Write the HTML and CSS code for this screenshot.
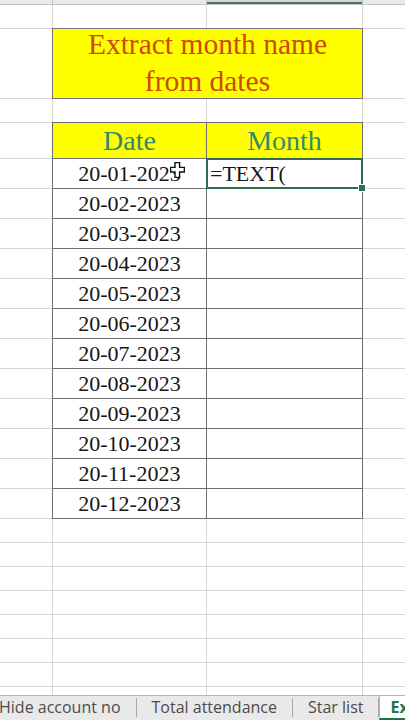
FILE: index.html
```html
<!DOCTYPE html>
<html>
<head>
<meta charset="utf-8">
<title>Extract month name from dates</title>
<link rel="stylesheet" href="styles.css">
</head>
<body>
<div class="app">
  <div class="colheads">
    <div class="ch"></div>
    <div class="ch"></div>
    <div class="ch ch-sel"></div>
    <div class="ch"></div>
  </div>

  <div class="sheet">
    <div class="cell"></div><div class="cell"></div><div class="cell"></div><div class="cell"></div>

    <div class="cell"></div>
    <div class="cell title">Extract month name<br>from dates</div>
    <div class="cell"></div>

    <div class="cell"></div><div class="cell"></div><div class="cell"></div><div class="cell"></div>

    <div class="cell"></div>
    <div class="cell tbl head">Date</div>
    <div class="cell tbl head">Month</div>
    <div class="cell"></div>

    <div class="cell"></div>
    <div class="cell tbl date has-cursor">20-01-2023
      <svg class="cursor" width="15" height="16" viewBox="0 0 15 16"><path d="M5 0.6 H9.6 V5.4 H14.4 V10 H9.6 V15.4 H5 V10 H0.6 V5.4 H5 Z" fill="#fff" stroke="#111" stroke-width="1.4" stroke-linejoin="miter"/></svg>
    </div>
    <div class="cell tbl val selected">=TEXT(</div>
    <div class="cell"></div>

    <div class="cell"></div><div class="cell tbl date">20-02-2023</div><div class="cell tbl val"></div><div class="cell"></div>
    <div class="cell"></div><div class="cell tbl date">20-03-2023</div><div class="cell tbl val"></div><div class="cell"></div>
    <div class="cell"></div><div class="cell tbl date">20-04-2023</div><div class="cell tbl val"></div><div class="cell"></div>
    <div class="cell"></div><div class="cell tbl date">20-05-2023</div><div class="cell tbl val"></div><div class="cell"></div>
    <div class="cell"></div><div class="cell tbl date">20-06-2023</div><div class="cell tbl val"></div><div class="cell"></div>
    <div class="cell"></div><div class="cell tbl date">20-07-2023</div><div class="cell tbl val"></div><div class="cell"></div>
    <div class="cell"></div><div class="cell tbl date">20-08-2023</div><div class="cell tbl val"></div><div class="cell"></div>
    <div class="cell"></div><div class="cell tbl date">20-09-2023</div><div class="cell tbl val"></div><div class="cell"></div>
    <div class="cell"></div><div class="cell tbl date">20-10-2023</div><div class="cell tbl val"></div><div class="cell"></div>
    <div class="cell"></div><div class="cell tbl date">20-11-2023</div><div class="cell tbl val"></div><div class="cell"></div>
    <div class="cell"></div><div class="cell tbl date">20-12-2023</div><div class="cell tbl val"></div><div class="cell"></div>

    <div class="cell"></div><div class="cell"></div><div class="cell"></div><div class="cell"></div>
    <div class="cell"></div><div class="cell"></div><div class="cell"></div><div class="cell"></div>
    <div class="cell"></div><div class="cell"></div><div class="cell"></div><div class="cell"></div>
    <div class="cell"></div><div class="cell"></div><div class="cell"></div><div class="cell"></div>
    <div class="cell"></div><div class="cell"></div><div class="cell"></div><div class="cell"></div>
    <div class="cell"></div><div class="cell"></div><div class="cell"></div><div class="cell"></div>
    <div class="cell"></div><div class="cell"></div><div class="cell"></div><div class="cell"></div>
    <div class="cell"></div><div class="cell"></div><div class="cell"></div><div class="cell"></div>
  </div>

  <div class="tabs">
    <div class="tab first">Hide account no</div>
    <div class="tab">Total attendance</div>
    <div class="tab">Star list</div>
    <div class="tab active">Extract month</div>
  </div>
</div>
</body>
</html>
```

FILE: styles.css
```css
* {
  box-sizing: border-box;
}

html,
body {
  margin: 0;
  padding: 0;
  background: #ffffff;
}

.app {
  width: 405px;
  height: 720px;
  overflow: hidden;
  display: flex;
  flex-direction: column;
  font-family: "Liberation Serif", "Times New Roman", serif;
  color: #161616;
}

/* column header strip (mostly scrolled away) */
.colheads {
  flex: 0 0 5px;
  display: grid;
  grid-template-columns: 52px 153px 155px 1fr;
  column-gap: 1px;
  background: #c4c4c4;
  border-bottom: 1px solid #c4c4c4;
}

.ch {
  background: #e8e8e8;
}

.ch-sel {
  background: #d4d4d4;
  border-bottom: 2px solid #4b7164;
}

/* worksheet grid */
.sheet {
  flex: 1 1 auto;
  min-height: 0;
  overflow: hidden;
  display: grid;
  grid-template-columns: 52px 153px 155px 1fr;
  grid-template-rows: 23px 69px 23px 35px repeat(12, 29px);
  grid-auto-rows: 23px;
  gap: 1px;
  align-content: start;
  background: #d6d6d6;
}

.cell {
  background: #ffffff;
  min-width: 0;
}

.title {
  grid-column: 2 / 4;
  background: #ffff00;
  outline: 1px solid #747474;
  display: flex;
  align-items: center;
  justify-content: center;
  text-align: center;
  font-size: 29.5px;
  line-height: 37px;
  padding-bottom: 2px;
  color: #d0480a;
  white-space: nowrap;
}

.tbl {
  outline: 1px solid #6e6e6e;
}

.head {
  background: #ffff00;
  text-align: center;
  font-size: 28px;
  line-height: 35px;
  color: #338a6b;
}

.date {
  text-align: center;
  font-size: 22px;
  line-height: 29px;
}

.val {
  font-size: 22px;
  line-height: 29px;
  padding-left: 3px;
}

.has-cursor {
  position: relative;
}

.cursor {
  position: absolute;
  left: 117px;
  top: 3px;
}

.selected {
  position: relative;
  z-index: 2;
  outline: 2px solid #2c6e4e;
  outline-offset: -1px;
}

.selected::after {
  content: "";
  position: absolute;
  right: -4px;
  bottom: -4px;
  width: 6px;
  height: 6px;
  background: #2c6e4e;
  border: 1px solid #ffffff;
}

/* sheet tabs */
.tabs {
  flex: 0 0 25px;
  display: flex;
  align-items: flex-start;
  background: #e9e9e9;
  border-top: 1px solid #b4b4b4;
  font-family: "Open Sans", "Noto Sans", sans-serif;
  font-size: 16px;
  color: #4c4c4c;
  white-space: nowrap;
}

.tab {
  flex: 0 0 auto;
  margin-top: 2px;
  padding: 0 15px;
  line-height: 19px;
  border-right: 1px solid #a6a6a6;
}

.tab.first {
  padding-left: 0;
  margin-left: -1px;
}

.tab.active {
  align-self: stretch;
  margin-top: 0;
  padding: 2px 10px 0 10px;
  background: #ffffff;
  border-right: none;
  border-left: 1px solid #b4b4b4;
  border-bottom: 2px solid #217346;
  color: #217346;
  font-weight: bold;
}
```
